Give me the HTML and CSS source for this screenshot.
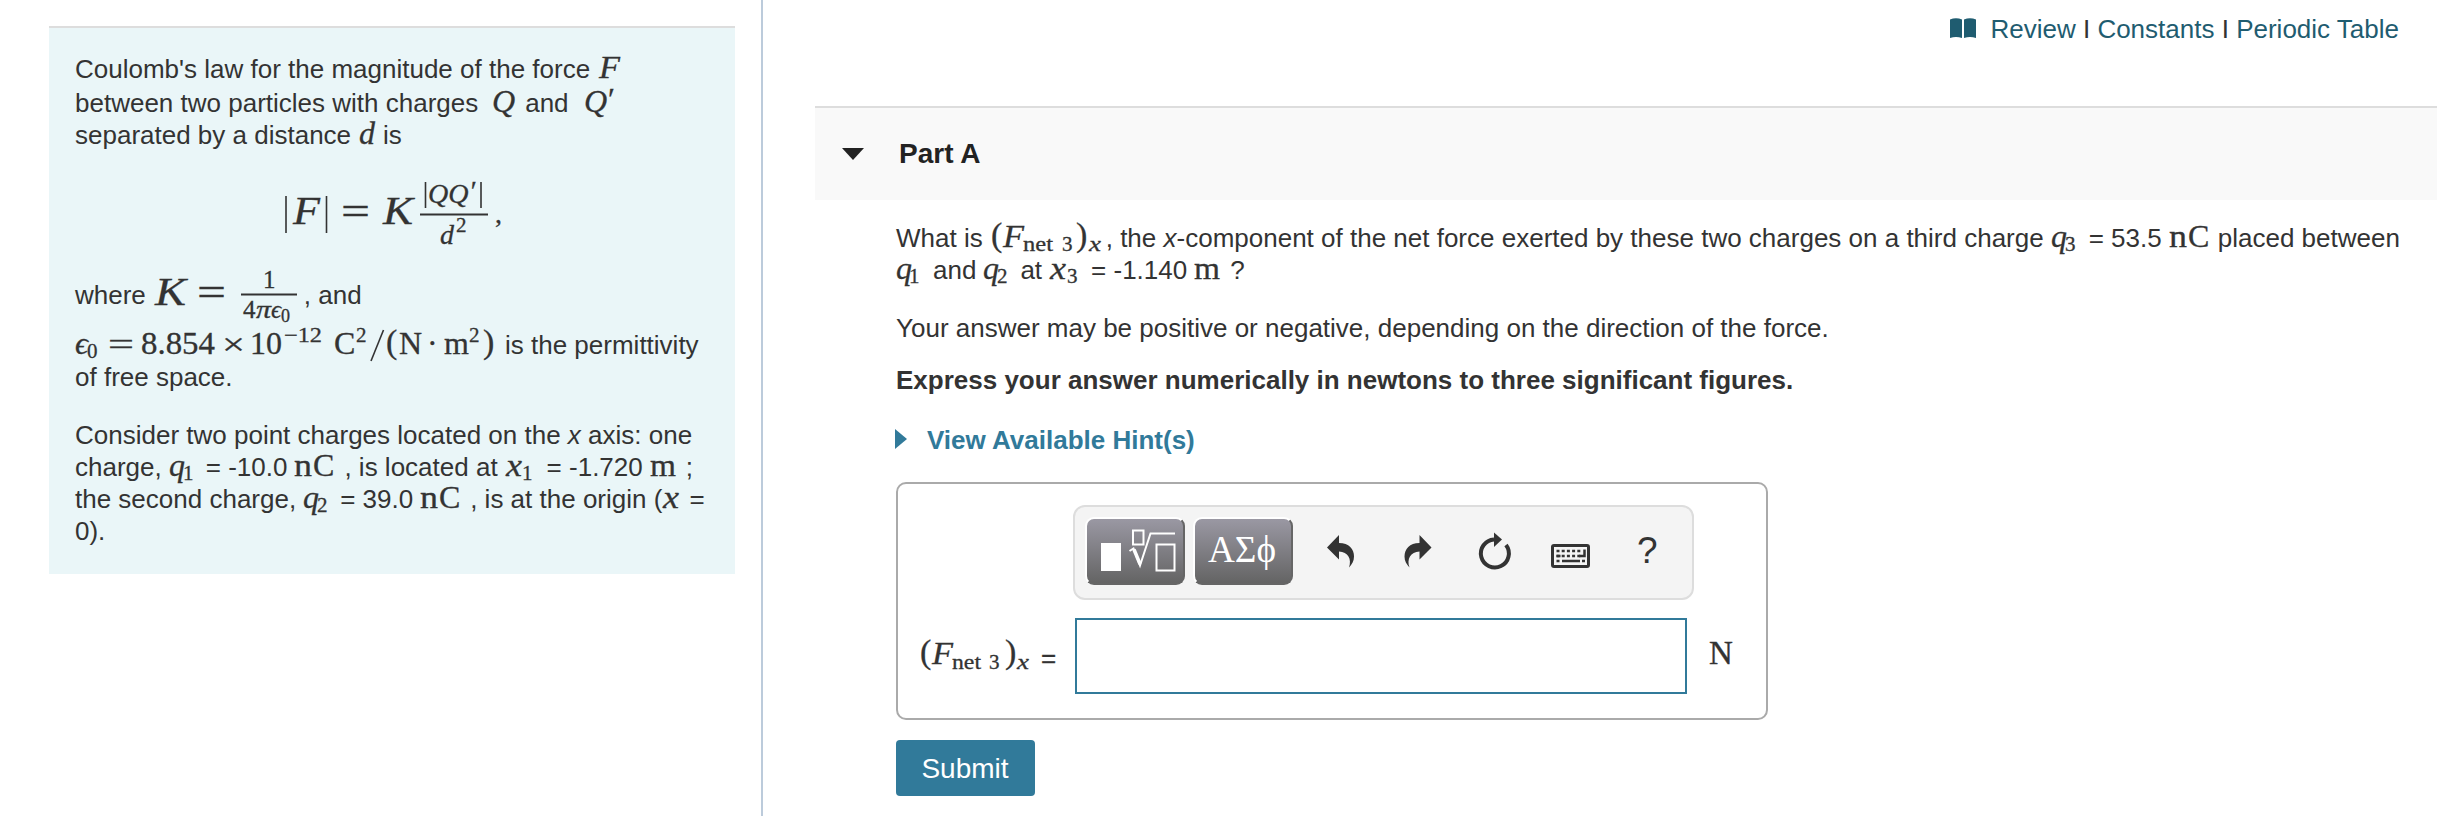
FILE: index.html
```html
<!DOCTYPE html>
<html lang="en">
  <head>
    <meta charset="UTF-8" />
    <meta name="viewport" content="width=device-width, initial-scale=1.0" />
    <title>Coulomb's Law - Part A</title>
    <link rel="stylesheet" href="styles.css">
  </head>
  <body>
    <!-- Problem statement -->
    <aside class="sidebar">
      <div class="intro">
        <p>
          <span class="line first">Coulomb's law for the magnitude of the force<svg class="math" width="34" height="20"><text class="it" x="9" y="20" textLength="21" lengthAdjust="spacingAndGlyphs">F</text></svg></span>
          <span class="line">between two particles with charges<svg class="math" width="47" height="20"><text class="it" x="14" y="20">Q</text></svg>and<svg class="math" width="46" height="20"><text class="it" x="15" y="20">Q</text><text class="it" x="37" y="18">′</text></svg></span>
          <span class="line">separated by a distance<svg class="math" width="32" height="20"><text class="it" x="8" y="20">d</text></svg>is</span>
        </p>

        <svg class="equation" width="230" height="80">
          <path class="rule thin" d="M6 25v37M46.500 25v37M145.500 11v26M201 11v26" />
          <text class="it big" x="13" y="53" textLength="27" lengthAdjust="spacingAndGlyphs">F</text>
          <text class="big" x="61" y="54" textLength="29" lengthAdjust="spacingAndGlyphs">=</text>
          <text class="it big" x="103" y="53" textLength="30" lengthAdjust="spacingAndGlyphs">K</text>
          <text class="it mid" x="148" y="32">QQ</text>
          <text class="it mid" x="189" y="29">′</text>
          <path class="rule" d="M140 43.500h68" />
          <text class="it mid" x="160" y="73">d</text>
          <text class="sub" x="176" y="61">2</text>
          <text class="mid" x="215" y="52">,</text>
        </svg>

        <p>
          <span class="line tall">where<svg class="math" width="158" height="20">
              <text class="it big" x="9" y="21" textLength="31" lengthAdjust="spacingAndGlyphs">K</text>
              <text class="big" x="51" y="22" textLength="29" lengthAdjust="spacingAndGlyphs">=</text>
              <text class="small" x="117" y="4">1</text>
              <path class="rule" d="M95 10.500h56" />
              <text class="small" x="97" y="34">4</text>
              <text class="it small" x="110" y="34" textLength="15" lengthAdjust="spacingAndGlyphs">π</text>
              <text class="it small" x="125" y="34">ϵ</text>
              <text class="tiny" x="135" y="38">0</text>
            </svg>, and</span>
          <span class="line"><svg class="math" width="430" height="20">
              <text class="it" x="0" y="20">ϵ</text>
              <text class="sub" x="12" y="24">0</text>
              <text x="33" y="21" textLength="26" lengthAdjust="spacingAndGlyphs">=</text>
              <text x="66" y="20" textLength="74" lengthAdjust="spacingAndGlyphs">8.854</text>
              <text x="147" y="21" textLength="23" lengthAdjust="spacingAndGlyphs">×</text>
              <text x="175" y="20">10</text>
              <text class="sub" x="209" y="8" textLength="38" lengthAdjust="spacingAndGlyphs">−12</text>
              <text x="259" y="20">C</text>
              <text class="sub" x="281" y="8">2</text>
              <path class="rule thin" d="M296 27L308.500 -4" />
              <text class="paren" x="311" y="19">(</text>
              <text x="324" y="20">N</text>
              <text x="352" y="20">·</text>
              <text x="369" y="20">m</text>
              <text class="sub" x="394" y="8">2</text>
              <text class="paren" x="408" y="19">)</text>
            </svg>is the permittivity</span>
          <span class="line">of free space.</span>
        </p>

        <p class="charges">
          <span class="line">Consider two point charges located on the <i>x</i> axis: one</span>
          <span class="line">charge,<svg class="math" width="44" height="20"><text class="it" x="7" y="20">q</text><text class="sub" x="21" y="24">1</text></svg>= -10.0<svg class="math" width="57" height="20"><text x="7" y="20" textLength="18" lengthAdjust="spacingAndGlyphs">n</text><text x="26" y="20">C</text></svg>, is located at<svg class="math" width="49" height="20"><text class="it" x="8" y="20" textLength="16" lengthAdjust="spacingAndGlyphs">x</text><text class="sub" x="24" y="24">1</text></svg>= -1.720<svg class="math" width="43" height="20"><text x="7" y="20" textLength="26" lengthAdjust="spacingAndGlyphs">m</text></svg>;</span>
          <span class="line">the second charge,<svg class="math" width="44" height="20"><text class="it" x="7" y="20">q</text><text class="sub" x="21" y="24">2</text></svg>= 39.0<svg class="math" width="57" height="20"><text x="7" y="20" textLength="18" lengthAdjust="spacingAndGlyphs">n</text><text x="26" y="20">C</text></svg>, is at the origin (<svg class="math" width="27" height="20"><text class="it" x="1" y="20" textLength="16" lengthAdjust="spacingAndGlyphs">x</text></svg>=</span>
          <span class="line">0).</span>
        </p>
      </div>
    </aside>

    <main class="content">
      <nav class="resources">
        <svg class="book" width="26" height="21" viewBox="0 0 26 21">
          <path d="M0 1.500Q6 -1 12 1.500V20Q6 18 0 20ZM14 1.500Q20 -1 26 1.500V20Q20 18 14 20Z" />
        </svg>
        <a href="#">Review</a> <span>I</span> <a href="#">Constants</a> <span>I</span> <a href="#">Periodic Table</a>
      </nav>

      <header class="part-header">
        <span class="caret"></span>
        <h2>Part A</h2>
      </header>

      <section class="part">
        <p>
          <span class="line">What is<svg class="math" width="123" height="20">
              <text class="paren" x="8" y="19">(</text>
              <text class="it" x="20" y="20" textLength="21" lengthAdjust="spacingAndGlyphs">F</text>
              <text class="sub" x="40" y="24" textLength="30" lengthAdjust="spacingAndGlyphs">net</text>
              <text class="sub" x="79" y="24">3</text>
              <text class="paren" x="93" y="19">)</text>
              <text class="it sub" x="106" y="24" textLength="12" lengthAdjust="spacingAndGlyphs">x</text>
            </svg>, the <i>x</i>-component of the net force exerted by these two charges on a third charge<svg class="math" width="45" height="20"><text class="it" x="7" y="20">q</text><text class="sub" x="21" y="24">3</text></svg>= 53.5<svg class="math" width="56" height="20"><text x="7" y="20" textLength="18" lengthAdjust="spacingAndGlyphs">n</text><text x="26" y="20">C</text></svg>placed between</span>
          <span class="line"><svg class="math" width="37" height="20"><text class="it" x="0" y="20">q</text><text class="sub" x="13" y="24">1</text></svg>and<svg class="math" width="44" height="20"><text class="it" x="7" y="20">q</text><text class="sub" x="21" y="24">2</text></svg>at<svg class="math" width="49" height="20"><text class="it" x="8" y="20" textLength="16" lengthAdjust="spacingAndGlyphs">x</text><text class="sub" x="25" y="24">3</text></svg>= -1.140<svg class="math" width="43" height="20"><text x="7" y="20" textLength="26" lengthAdjust="spacingAndGlyphs">m</text></svg>?</span>
        </p>
        <p class="note">Your answer may be positive or negative, depending on the direction of the force.</p>
        <p class="express">Express your answer numerically in newtons to three significant figures.</p>
        <a class="hints" href="#"><span class="arrow"></span>View Available Hint(s)</a>

        <!-- Answer box -->
        <div class="answer">
          <div class="toolbar">
            <button class="key" aria-label="Templates">
              <svg width="75" height="44">
                <rect x="3" y="14" width="20" height="28" fill="#fff" />
                <path fill="none" stroke="#fff" stroke-width="2" d="M35 1.500h10.500v14H35ZM58.500 15.500h18v26h-18ZM31.500 22l4-2.500L42 36.500L52.500 4.500H77" />
                <path fill="none" stroke="#fff" stroke-width="3.500" d="M36 20.500L42 35" />
              </svg>
            </button>
            <button class="key" aria-label="Symbols">
              <svg width="70" height="44"><text class="greek" x="0" y="33" textLength="68" lengthAdjust="spacingAndGlyphs">ΑΣϕ</text></svg>
            </button>
            <svg class="tools" width="340" height="50">
              <path d="M1 20.500L13 8v8C23 16 28 22 28 29.500C28 34 26 37 23 40.500C26 32 22 25 13 24.500V32.500Z" />
              <path d="M105.500 20.500L93.500 8v8C83.500 16 78.500 22 78.500 29.500C78.500 34 80.500 37 83.500 40.500C80.500 32 84.500 25 93.500 24.500V32.500Z" />
              <path class="ring" d="M180 18A14 14 0 1 1 168 12.500" />
              <path d="M168 5.500L176 12.500L168 20Z" />
              <rect class="frame" x="226.500" y="18.500" width="36" height="21" rx="1.500" />
              <path class="dots" d="M230.500 24h25M230.500 29h24M230.500 34h3M256 34h3" />
              <path class="bar" d="M236 34h18M230.500 29h4M253 29h5.500v-6.500" />
              <text class="help" x="311" y="36">?</text>
            </svg>
          </div>
          <div class="entry">
            <svg class="label" width="154" height="40">
              <text class="paren" x="-1" y="27">(</text>
              <text class="it" x="11" y="28" textLength="21" lengthAdjust="spacingAndGlyphs">F</text>
              <text class="sub" x="31" y="33" textLength="29" lengthAdjust="spacingAndGlyphs">net</text>
              <text class="sub" x="68" y="33">3</text>
              <text class="paren" x="84" y="27">)</text>
              <text class="it sub" x="96" y="33" textLength="12" lengthAdjust="spacingAndGlyphs">x</text>
              <text class="equals" x="120" y="31">=</text>
            </svg>
            <input type="text" aria-label="Answer" />
            <span class="unit">N</span>
          </div>
        </div>

        <button class="submit">Submit</button>
      </section>
    </main>
  </body>
</html>
```
FILE: styles.css
```css
* {
  margin: 0;
  padding: 0;
  box-sizing: border-box;
}

body {
  display: flex;
  height: 816px;
  overflow: hidden;
  background: #fff;
  color: #333;
  font-family: "Liberation Sans", Arial, sans-serif;
  font-size: 26px;
  line-height: 32px;
}

a {
  color: #1f5c70;
  text-decoration: none;
}

/* Left column */
.sidebar {
  width: 763px;
  padding: 26px 26px 0 49px;
  border-right: 2px solid #bccbdb;
}

.intro {
  height: 548px;
  padding: 25px 0 0 26px;
  border-top: 2px solid #ddd;
  background: #eaf6f8;
}

.line {
  display: block;
  height: 32px;
  white-space: nowrap;
}

.line.first {
  height: 34px;
}

.line.tall {
  height: 50px;
}

.charges {
  margin-top: 26px;
}

/* Formulas */
.math,
.equation,
.label {
  overflow: visible;
  fill: #333;
  font-family: "Liberation Serif", "DejaVu Serif", serif;
  font-size: 32px;
}

.math text,
.equation text,
.label text {
  stroke: #333;
  stroke-width: 0.3;
}

.math {
  vertical-align: baseline;
}

.equation {
  display: block;
  margin: 20px 0 28px 205px;
}

.it {
  font-style: italic;
}

.big {
  font-size: 40px;
}

.mid {
  font-size: 28px;
}

.small {
  font-size: 25px;
}

.sub {
  font-size: 21px;
}

.tiny {
  font-size: 18px;
}

.paren {
  font-size: 34px;
}

.label .equals {
  font-family: "Liberation Sans", Arial, sans-serif;
  font-size: 26px;
}

.rule {
  fill: none;
  stroke: #333;
  stroke-width: 2;
}

.rule.thin {
  stroke-width: 1.6;
}

/* Right column */
.content {
  flex: 1;
  padding: 0 27px 0 52px;
}

.resources {
  height: 106px;
  padding: 13px 38px 0 0;
  text-align: right;
}

.book {
  margin-right: 7px;
  vertical-align: -1px;
  fill: #1f5c70;
}

.part-header {
  display: flex;
  align-items: center;
  height: 94px;
  padding-left: 27px;
  border-top: 2px solid #ddd;
  background: #f9f9f9;
  color: #222;
}

.part-header h2 {
  margin-left: 35px;
  font-size: 28px;
}

.caret {
  border: 11px solid transparent;
  border-top: 12px solid #222;
  border-bottom: 0;
}

.part {
  padding: 22px 0 0 81px;
}

.note {
  margin-top: 26px;
}

.express {
  margin-top: 20px;
  font-weight: bold;
}

.hints {
  display: flex;
  align-items: center;
  margin-top: 28px;
  color: #317a9a;
  font-weight: bold;
}

.arrow {
  margin: 0 20px 3px -1px;
  border: 10px solid transparent;
  border-left: 12px solid #317a9a;
  border-right: 0;
}

.answer {
  width: 872px;
  height: 238px;
  margin-top: 26px;
  padding: 21px 0 0 23px;
  border: 2px solid #aaa;
  border-radius: 10px;
}

.toolbar {
  display: flex;
  width: 621px;
  height: 95px;
  margin-left: 152px;
  padding: 10px 0 0 10px;
  border: 2px solid #ddd;
  border-radius: 12px;
  background: #f4f4f4;
}

.key {
  display: flex;
  align-items: center;
  justify-content: center;
  width: 100px;
  height: 68px;
  margin-right: 8px;
  border: 2px solid;
  border-color: #fff #666 #666 #fff;
  border-radius: 9px;
  background: linear-gradient(#9a98a3, #646464);
}

.key svg {
  overflow: visible;
}

.greek {
  fill: #fff;
  font-family: "Liberation Serif", "DejaVu Serif", serif;
  font-size: 37px;
}

.tools {
  margin: 10px 0 0 25px;
  fill: #333;
}

.ring,
.frame,
.dots,
.bar {
  fill: none;
  stroke: #333;
}

.ring {
  stroke-width: 4;
}

.frame {
  stroke-width: 3;
}

.dots {
  stroke-width: 2.5;
  stroke-dasharray: 3 2.2;
}

.bar {
  stroke-width: 2.5;
}

.help {
  font-size: 37px;
}

.entry {
  display: flex;
  align-items: center;
  height: 76px;
  margin-top: 18px;
}

.entry input {
  width: 612px;
  height: 76px;
  border: 2px solid #317a9a;
  font-size: 26px;
}

.unit {
  margin: -6px 0 0 22px;
  font-family: "Liberation Serif", serif;
  font-size: 33px;
  -webkit-text-stroke: 0.4px #333;
}

.submit {
  display: block;
  width: 139px;
  height: 56px;
  padding: 1px 1px 0 0;
  margin-top: 20px;
  border: none;
  border-radius: 4px;
  background: #317a9a;
  color: #fff;
  font-family: "Liberation Sans", Arial, sans-serif;
  font-size: 28px;
}
```
